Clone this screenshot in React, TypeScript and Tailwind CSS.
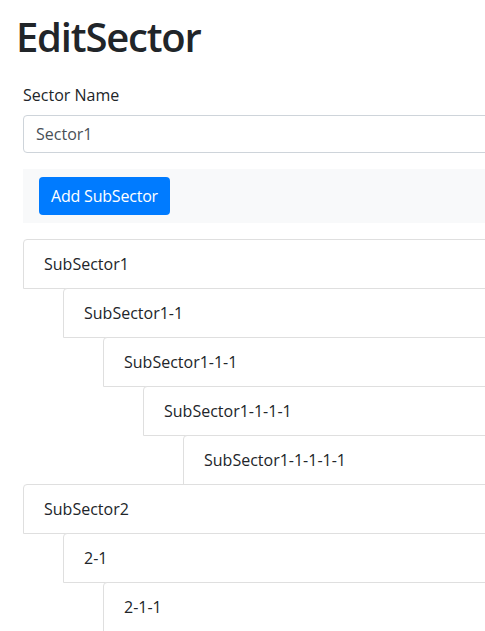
type Node = { name: string; children?: Node[] };

const tree: Node[] = [
  {
    name: "SubSector1",
    children: [
      {
        name: "SubSector1-1",
        children: [
          {
            name: "SubSector1-1-1",
            children: [
              {
                name: "SubSector1-1-1-1",
                children: [{ name: "SubSector1-1-1-1-1" }],
              },
            ],
          },
        ],
      },
    ],
  },
  {
    name: "SubSector2",
    children: [
      {
        name: "2-1",
        children: [{ name: "2-1-1" }],
      },
    ],
  },
];

function SectorItem({ node }: { node: Node }) {
  return (
    <div>
      <div className="-mb-px rounded-t border border-[#dfdfdf] bg-white px-5 py-3 leading-6">
        {node.name}
      </div>
      {node.children && (
        <div className="pl-10">
          {node.children.map((c) => (
            <SectorItem key={c.name} node={c} />
          ))}
        </div>
      )}
    </div>
  );
}

export default function App() {
  return (
    <div
      className="h-[631px] w-[485px] overflow-hidden bg-white text-base text-[#212529]"
      style={{ fontFamily: '"Open Sans", sans-serif' }}
    >
      <div className="w-[800px]">
        <h1 className="ml-4 pt-[13px] text-[40px] font-semibold leading-[48px] tracking-[-1.2px]">
          EditSector
        </h1>

        <div className="ml-[23px] mt-[22px]">
          {/* Sector name */}
          <div className="mb-4">
            <label className="mb-2 block leading-6">Sector Name</label>
            <input
              readOnly
              value="Sector1"
              className="block h-[38px] w-full rounded border border-[#ced4da] px-3 text-[#495057] outline-none"
            />
          </div>

          {/* Toolbar */}
          <div className="mb-4 bg-[#f8f9fa] px-4 py-2">
            <button className="h-[38px] rounded bg-[#007bff] px-3 leading-6 tracking-[-0.2px] text-white">
              Add SubSector
            </button>
          </div>

          {/* Subsector tree */}
          <div>
            {tree.map((n) => (
              <SectorItem key={n.name} node={n} />
            ))}
          </div>
        </div>
      </div>
    </div>
  );
}
